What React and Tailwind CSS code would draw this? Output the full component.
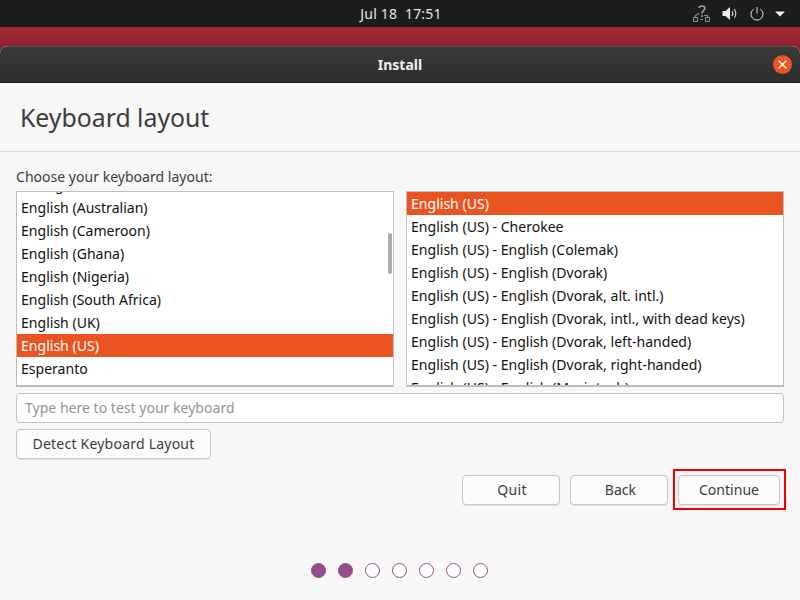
const left = ["Dzongkha", "English (Australian)", "English (Cameroon)", "English (Ghana)", "English (Nigeria)", "English (South Africa)", "English (UK)", "English (US)", "Esperanto"];
const right = ["English (US)", "English (US) - Cherokee", "English (US) - English (Colemak)", "English (US) - English (Dvorak)", "English (US) - English (Dvorak, alt. intl.)", "English (US) - English (Dvorak, intl., with dead keys)", "English (US) - English (Dvorak, left-handed)", "English (US) - English (Dvorak, right-handed)", "English (US) - English (Macintosh)"];

function Row({ label, selected }) {
  return (
    <div className={`h-[23px] shrink-0 pl-1 leading-[23px] whitespace-nowrap ${selected ? "bg-[#e95420] text-white" : "text-[#111111]"}`}>
      {label}
    </div>
  );
}

function Btn({ children, className = "" }) {
  return (
    <div className={`h-[30px] rounded-[4px] border border-[#c4c4c4] bg-[#fbfbfb] flex items-center justify-center text-[#3d3d3d] shadow-[0_1px_0_#e4e4e4] ${className}`}>
      {children}
    </div>
  );
}

function Dot({ filled }) {
  return <div className={`w-[15px] h-[15px] rounded-full border-[1.5px] border-[#924d8b] ${filled ? "bg-[#924d8b]" : "bg-white"}`} />;
}

export default function App() {
  return (
    <div className="w-[800px] h-[600px] overflow-hidden flex flex-col text-[14.05px] bg-[#8f2130]" style={{ fontFamily: '"Noto Sans", sans-serif' }}>
      <div className="h-[27px] shrink-0 bg-[#1c1c1c] relative flex items-center justify-center text-[#e6e6e6] text-[14px]">
        <span className="ml-[2px] tracking-[0.2px]">Jul 18&nbsp;&nbsp;17:51</span>
        <div className="absolute right-[15px] top-0 h-[27px] flex items-center">
          <svg width="17" height="17" viewBox="0 0 17 17" fill="none" className="mr-[12px]" stroke="#8a8a8a" strokeWidth="1.1">
            <rect x="0.5" y="12.5" width="4" height="4" />
            <rect x="12.5" y="12.5" width="4" height="4" />
            <path d="M2.5 12.5 V10.5 L6.5 8 M14.5 12.5 V10.5 H11" />
            <path d="M6 3 C6.5 0.5 11.5 0.3 11.8 3 C12 5.5 9 5.5 9 8.5" strokeWidth="1.6" stroke="#a8a8a8" />
            <circle cx="9" cy="11" r="1" fill="#a8a8a8" stroke="none" />
            <path d="M7 14.5 H10" />
          </svg>
          <svg width="15" height="15" viewBox="0 0 15 15" fill="none" className="mr-[13px]">
            <path d="M0.5 5 H3.5 L8 1 V14 L3.5 10 H0.5 Z" fill="#efefef" />
            <path d="M10 5 C11 6.5 11 8.5 10 10" stroke="#c8c8c8" strokeWidth="1.2" />
            <path d="M12.3 3 C14.3 5.5 14.3 9.5 12.3 12" stroke="#c8c8c8" strokeWidth="1.2" />
          </svg>
          <svg width="14" height="14" viewBox="0 0 14 14" fill="none" className="mr-[11px]" stroke="#e0e0e0" strokeWidth="1">
            <path d="M3.8 2 A6 6 0 1 0 10.2 2" />
            <path d="M7 0 V6.5" />
          </svg>
          <svg width="10" height="6" viewBox="0 0 10 6"><path d="M0 0.5 H10 L5 5.5 Z" fill="#f0f0f0" /></svg>
        </div>
      </div>

      <div className="h-[19px] shrink-0 bg-gradient-to-b from-[#aa2b32] to-[#8c2030]" />

      <div className="flex-1 flex flex-col rounded-t-[8px] overflow-hidden bg-[#f7f7f7]">
        <div className="h-[37px] shrink-0 bg-gradient-to-b from-[#3b3a3a] to-[#2f2e2e] border-t border-t-[#4a4a4a] border-b border-b-[#1d1d1d] relative flex items-center justify-center">
          <span className="font-bold text-[14px] text-[#f0f0f0]">Install</span>
          <div className="absolute right-[8px] top-[8px] w-[19px] h-[19px] rounded-full bg-[#e95420] flex items-center justify-center">
            <svg width="9" height="9" viewBox="0 0 9 9" stroke="#ffffff" strokeWidth="1.3"><path d="M0.5 0.5 L8.5 8.5 M8.5 0.5 L0.5 8.5" /></svg>
          </div>
        </div>

        <div className="h-[69px] shrink-0 border-b border-[#dcdcdc] pl-[20px] flex items-center">
          <h1 className="text-[24.8px] text-[#3d3d3d] mt-[1px]">Keyboard layout</h1>
        </div>

        <div className="px-[16px] flex flex-col">
          <div className="h-[39px] pt-[15px] text-[#3d3d3d] leading-[20px]">Choose your keyboard layout:</div>

          <div className="flex gap-[12px] h-[196px]">
            <div className="relative w-[378px] bg-white border border-[#bdbdbd] border-b-2 overflow-hidden">
              <div className="mt-[-19px] flex flex-col">
                {left.map((l, i) => <Row key={i} label={l} selected={l === "English (US)"} />)}
              </div>
              <div className="absolute right-[1px] top-[41px] w-[4px] h-[41px] rounded-full bg-[#ababab]" />
            </div>
            <div className="w-[378px] bg-white border border-[#bdbdbd] border-b-2 overflow-hidden flex flex-col">
              {right.map((l, i) => <Row key={i} label={l} selected={i === 0} />)}
            </div>
          </div>

          <div className="mt-[6px] h-[30px] rounded-[4px] border border-[#c4c4c4] bg-white pl-[8px] flex items-center text-[#8e959c]">
            Type here to test your keyboard
          </div>

          <div className="mt-[6px] flex">
            <Btn className="w-[195px] tracking-[0.2px]">Detect Keyboard Layout</Btn>
          </div>

          <div className="mt-[16px] flex justify-end gap-[10px] pr-[4px]">
            <Btn className="w-[98px] pl-[2px] tracking-[0.3px]">Quit</Btn>
            <Btn className="w-[98px] pl-[3px]">Back</Btn>
            <div className="relative">
              <Btn className="w-[102px]">Continue</Btn>
              <div className="absolute left-[-5px] top-[-6px] w-[113px] h-[41px] border-2 border-[#ee0000]" />
            </div>
          </div>

          <div className="mt-[58px] mr-[2px] flex justify-center gap-[12px]">
            <Dot filled /><Dot filled /><Dot /><Dot /><Dot /><Dot /><Dot />
          </div>
        </div>
      </div>
    </div>
  );
}
